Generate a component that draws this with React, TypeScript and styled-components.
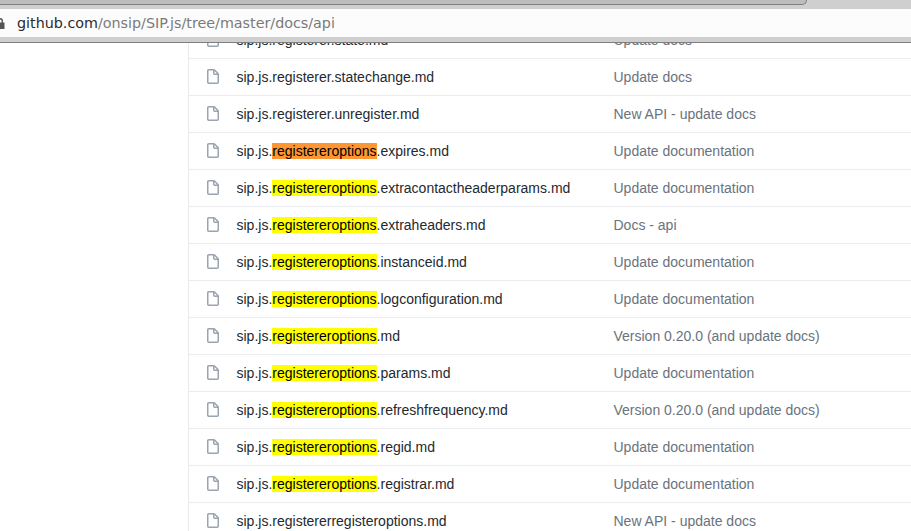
import React from "react";
import styled, { createGlobalStyle } from "styled-components";

const Global = createGlobalStyle`
  html, body { margin: 0; padding: 0; height: 100%; overflow: hidden; background: #fff; }
  body { font-family: "Liberation Sans", Arial, sans-serif; }
  #root { height: 100%; }
`;

const Page = styled.div`
  width: 911px;
  height: 531px;
  overflow: hidden;
  display: flex;
  flex-direction: column;
  background: #fff;
`;

const Chrome = styled.header`
  flex: none;
  height: 43px;
  background: #cfcfcf;
  border-bottom: 1px solid #7f7f7f;
  box-sizing: border-box;
  display: flex;
  flex-direction: column;
  position: relative;
  z-index: 2;
`;

const TabStrip = styled.div`
  flex: none;
  height: 9px;
  display: flex;
  align-items: flex-start;
`;

const Tab = styled.div`
  width: 807px;
  height: 5px;
  box-sizing: border-box;
  background: #bdbdbd;
  border-bottom: 1px solid #7f7f7f;
  border-right: 1px solid #7f7f7f;
  border-bottom-right-radius: 5px;
`;

const UrlBar = styled.div`
  flex: none;
  height: 28px;
  background: #fcfcfc;
  display: flex;
  align-items: center;
  font-family: "DejaVu Sans", sans-serif;
  font-size: 14.3px;
  color: #7a7a7a;
  white-space: nowrap;
`;

const Lock = styled.svg`
  flex: none;
  width: 6px;
  height: 11px;
  margin-right: 11px;
`;

const Host = styled.span`
  color: #2b2b2b;
`;

const Body = styled.main`
  flex: 1;
  min-height: 0;
  padding-left: 188px;
  margin-top: -1px;
`;

const FileList = styled.div`
  border-left: 1px solid #e8eaed;
  height: 100%;
`;

const Row = styled.div`
  height: 37px;
  box-sizing: border-box;
  border-top: 1px solid #eaecef;
  display: flex;
  align-items: center;
  font-size: 14px;
  color: #24292e;
`;

const IconCell = styled.div`
  flex: none;
  width: 47.5px;
  padding-left: 16px;
  box-sizing: border-box;
  display: flex;
`;

const FileIcon = styled.svg`
  width: 16px;
  height: 16px;
  color: #9aa4b0;
  fill: currentColor;
`;

const NameCell = styled.div`
  flex: none;
  width: 377px;
  white-space: nowrap;
`;

const Message = styled.div`
  color: #6a737d;
  white-space: nowrap;
`;

const Mark = styled.mark<{ $active?: boolean }>`
  background: ${(p) => (p.$active ? "#ff9632" : "#ffff00")};
  color: #000;
`;

type File = { pre: string; mark?: string; post?: string; msg: string; active?: boolean };

const files: File[] = [
  { pre: "sip.js.registerer.statechange.md", msg: "Update docs" },
  { pre: "sip.js.registerer.unregister.md", msg: "New API - update docs" },
  { pre: "sip.js.", mark: "registereroptions", post: ".expires.md", msg: "Update documentation", active: true },
  { pre: "sip.js.", mark: "registereroptions", post: ".extracontactheaderparams.md", msg: "Update documentation" },
  { pre: "sip.js.", mark: "registereroptions", post: ".extraheaders.md", msg: "Docs - api" },
  { pre: "sip.js.", mark: "registereroptions", post: ".instanceid.md", msg: "Update documentation" },
  { pre: "sip.js.", mark: "registereroptions", post: ".logconfiguration.md", msg: "Update documentation" },
  { pre: "sip.js.", mark: "registereroptions", post: ".md", msg: "Version 0.20.0 (and update docs)" },
  { pre: "sip.js.", mark: "registereroptions", post: ".params.md", msg: "Update documentation" },
  { pre: "sip.js.", mark: "registereroptions", post: ".refreshfrequency.md", msg: "Version 0.20.0 (and update docs)" },
  { pre: "sip.js.", mark: "registereroptions", post: ".regid.md", msg: "Update documentation" },
  { pre: "sip.js.", mark: "registereroptions", post: ".registrar.md", msg: "Update documentation" },
  { pre: "sip.js.registererregisteroptions.md", msg: "New API - update docs" },
];

const Icon = () => (
  <FileIcon viewBox="0 0 16 16">
    <path
      fillRule="evenodd"
      d="M3.75 1.5a.25.25 0 00-.25.25v11.5c0 .138.112.25.25.25h8.5a.25.25 0 00.25-.25V6H9.75A1.75 1.75 0 018 4.25V1.5H3.75zm5.75.56v2.19c0 .138.112.25.25.25h2.19L9.5 2.06zM2 1.75C2 .784 2.784 0 3.75 0h5.086c.464 0 .909.184 1.237.513l3.414 3.414c.329.328.513.773.513 1.237v8.086A1.75 1.75 0 0112.25 15h-8.5A1.75 1.75 0 012 13.25V1.75z"
    />
  </FileIcon>
);

const Clipped = styled.div`
  height: 16px;
  overflow: hidden;
  display: flex;
  align-items: flex-end;
  font-size: 14px;
  color: #24292e;
`;

const ClipInner = styled.div`
  flex: none;
  height: 37px;
  display: flex;
  align-items: center;
  width: 100%;
`;

export default function App() {
  return (
    <Page>
      <Global />
      <Chrome>
        <TabStrip>
          <Tab />
        </TabStrip>
        <UrlBar>
          <Lock viewBox="0 0 6 11">
            <path d="M-3 4.5V3a3 3 0 0 1 6 0v1.5h1.5V11h-8V4.5zM-1.6 4.5h3.2V3a1.6 1.6 0 0 0-3.2 0z" fill="#555" fillRule="evenodd" />
          </Lock>
          <Host>github.com</Host>/onsip/SIP.js/tree/master/docs/api
        </UrlBar>
      </Chrome>
      <Body>
        <FileList>
          <Clipped>
            <ClipInner>
              <IconCell>
                <Icon />
              </IconCell>
              <NameCell>sip.js.registerer.state.md</NameCell>
              <Message>Update docs</Message>
            </ClipInner>
          </Clipped>
          {files.map((f) => (
            <Row key={f.pre + (f.post ?? "")}>
              <IconCell>
                <Icon />
              </IconCell>
              <NameCell>
                {f.pre}
                {f.mark && <Mark $active={f.active}>{f.mark}</Mark>}
                {f.post}
              </NameCell>
              <Message>{f.msg}</Message>
            </Row>
          ))}
        </FileList>
      </Body>
    </Page>
  );
}
